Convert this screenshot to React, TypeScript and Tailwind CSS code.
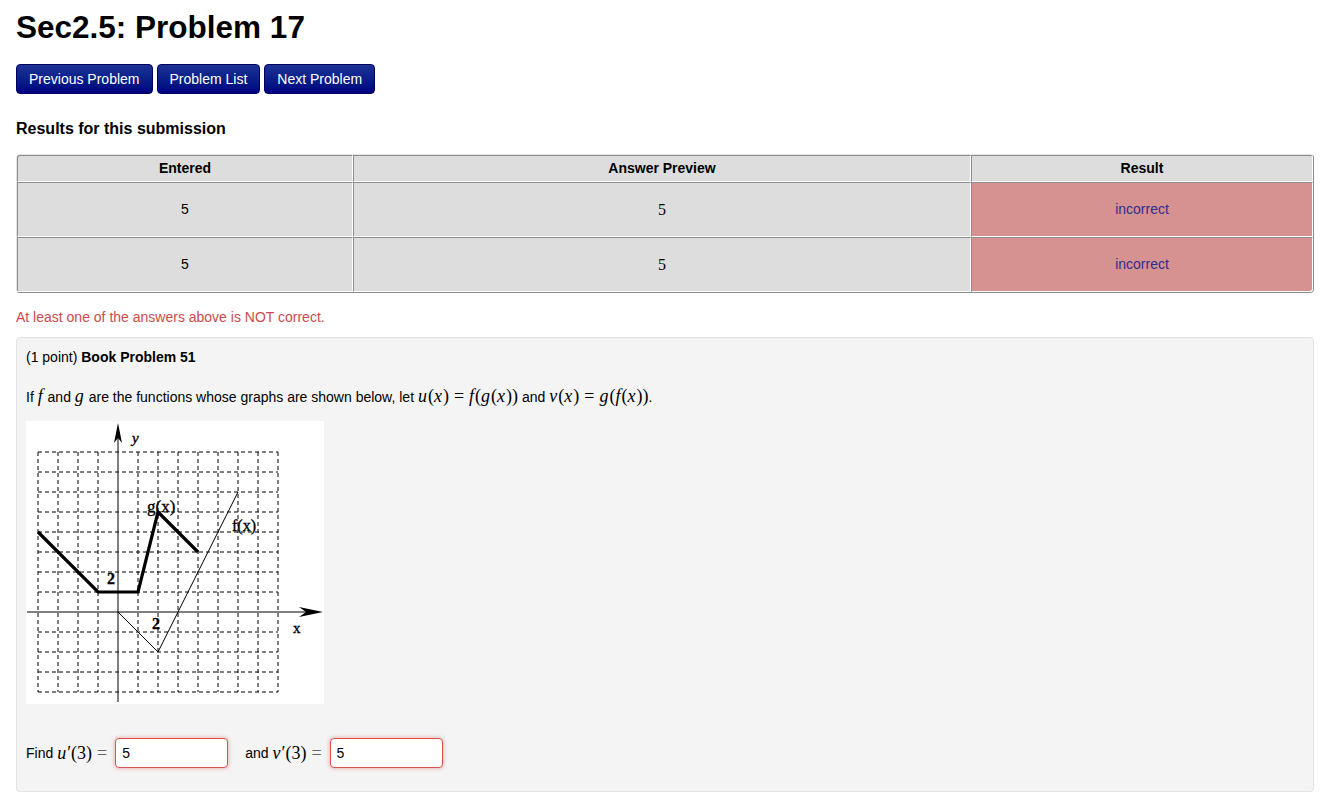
import React from "react";

const sans = { fontFamily: '"Liberation Sans", Arial, sans-serif' };
const mathFont = { fontFamily: '"Liberation Serif", "DejaVu Serif", serif' };

function M({ children }: { children: React.ReactNode }) {
  return (
    <span className="text-[18px] leading-[16px] text-black" style={mathFont}>
      {children}
    </span>
  );
}

function I({ children }: { children: React.ReactNode }) {
  return <span className="italic pr-[1px]">{children}</span>;
}

function Eq({ gray }: { gray?: boolean }) {
  return <span className={"mx-[5px]" + (gray ? " text-[#666]" : "")}>=</span>;
}

function Graph() {
  const xs = Array.from({ length: 13 }, (_, i) => 12 + i * 20);
  const ys = Array.from({ length: 13 }, (_, i) => 31 + i * 20);
  return (
    <svg width="298" height="283" viewBox="0 0 298 283" className="block bg-white">
      {xs.map((x) =>
        x === 92 ? null : (
          <line key={"v" + x} x1={x} y1={31} x2={x} y2={271} stroke="#000" strokeWidth="1" strokeDasharray="4 3" />
        )
      )}
      {ys.map((y) =>
        y === 191 ? null : (
          <line key={"h" + y} x1={12} y1={y} x2={252} y2={y} stroke="#000" strokeWidth="1" strokeDasharray="4 3" />
        )
      )}
      {/* axes */}
      <line x1={92} y1={8} x2={92} y2={281} stroke="#000" strokeWidth="1" />
      <line x1={1} y1={191} x2={290} y2={191} stroke="#000" strokeWidth="1" />
      <polygon points="92,2 96,22 92,17 88,22" fill="#000" />
      <polygon points="297,191 273,186 280,191 273,196" fill="#000" />
      {/* g(x) */}
      <polyline points="12,111 72,171 112,171 132,91 172,131" fill="none" stroke="#000" strokeWidth="3.2" />
      {/* f(x) */}
      <polyline points="92,191 132,231 212,71" fill="none" stroke="#000" strokeWidth="1" />
      <g style={{ fontFamily: '"Liberation Serif", serif' }} fill="#000" stroke="#000" strokeWidth="0.35">
        <text x="106" y="22" fontSize="15" fontStyle="italic">y</text>
        <text x="121" y="91" fontSize="17">g(x)</text>
        <text x="206" y="110" fontSize="16">f(x)</text>
        <text x="81" y="163" fontSize="16" fontWeight="bold">2</text>
        <text x="126" y="208" fontSize="16" fontWeight="bold">2</text>
        <text x="267" y="212" fontSize="15">x</text>
      </g>
    </svg>
  );
}

function NavButton({ children }: { children: React.ReactNode }) {
  return (
    <button className="h-[30px] px-[12px] rounded-[4px] border border-[#00005e] bg-gradient-to-b from-[#1d3294] to-[#000080] text-white text-[14px]">
      {children}
    </button>
  );
}

const cell = "border border-t-[#8c8c8c] border-l-[#8c8c8c] border-r-white border-b-white bg-[#dddddd] text-center";

const inputCls =
  "ml-[3px] h-[30px] w-[113px] rounded-[4px] border border-[#d9534f] bg-white px-[6px] text-[14px] shadow-[0_0_4px_rgba(217,83,79,0.55)] outline-none";

export default function App() {
  const rows = ["5", "5"];
  return (
    <div className="min-h-screen bg-white pl-[16px] pr-[10px] text-[14px] text-black" style={sans}>
      <h1 className="pt-[9px] text-[31.5px] leading-[36px] font-bold">Sec2.5: Problem 17</h1>

      <div className="mt-[19px] flex gap-[4px]">
        <NavButton>Previous Problem</NavButton>
        <NavButton>Problem List</NavButton>
        <NavButton>Next Problem</NavButton>
      </div>

      <h2 className="mt-[25px] text-[16px] leading-[20px] font-bold">Results for this submission</h2>

      <table className="mt-[15px] w-full border-separate border-spacing-0 border border-t-[#e4e4e4] border-l-[#e4e4e4] border-r-[#8c8c8c] border-b-[#8c8c8c] rounded-[4px] text-[14px]">
        <thead>
          <tr className="h-[27px]">
            <th className={cell + " w-[336px] font-bold rounded-tl-[3px]"}>Entered</th>
            <th className={cell + " w-[618px] font-bold"}>Answer Preview</th>
            <th className={cell + " font-bold rounded-tr-[3px]"}>Result</th>
          </tr>
        </thead>
        <tbody>
          {rows.map((v, i) => (
            <tr key={i} className="h-[55px]">
              <td className={cell + (i === 1 ? " rounded-bl-[3px]" : "")}>{v}</td>
              <td className={cell}>
                <span className="text-[16px]" style={mathFont}>{v}</span>
              </td>
              <td className={cell + " !bg-[#d69191] text-[#2e2e8f]" + (i === 1 ? " rounded-br-[3px]" : "")}>incorrect</td>
            </tr>
          ))}
        </tbody>
      </table>

      <p className="mt-[14px] leading-[20px] text-[#cc4b4b]">At least one of the answers above is NOT correct.</p>

      <div className="mt-[10px] mb-[4px] rounded-[4px] border border-[#e3e3e3] bg-[#f4f4f4] pl-[9px] pt-[9px] pb-[23px]">
        <p className="leading-[20px]">
          (1 point) <b>Book Problem 51</b>
        </p>
        <p className="mt-[20px] leading-[20px]">
          If <M><I>f</I></M> and <M><I>g</I></M> are the functions whose graphs are shown below, let{" "}
          <M>
            <I>u</I>(<I>x</I>)<Eq /><I>f</I>(<I>g</I>(<I>x</I>))
          </M>{" "}
          and{" "}
          <M>
            <I>v</I>(<I>x</I>)<Eq /><I>g</I>(<I>f</I>(<I>x</I>))
          </M>
          .
        </p>
        <div className="mt-[14px]">
          <Graph />
        </div>
        <div className="mt-[34px] flex items-center">
          <span>Find&nbsp;</span>
          <M>
            <I>u</I>′(3)<Eq gray />
          </M>
          <input defaultValue="5" className={inputCls} style={sans} />
          <span className="ml-[17px]">and&nbsp;</span>
          <M>
            <I>v</I>′(3)<Eq gray />
          </M>
          <input defaultValue="5" className={inputCls} style={sans} />
        </div>
      </div>
    </div>
  );
}
